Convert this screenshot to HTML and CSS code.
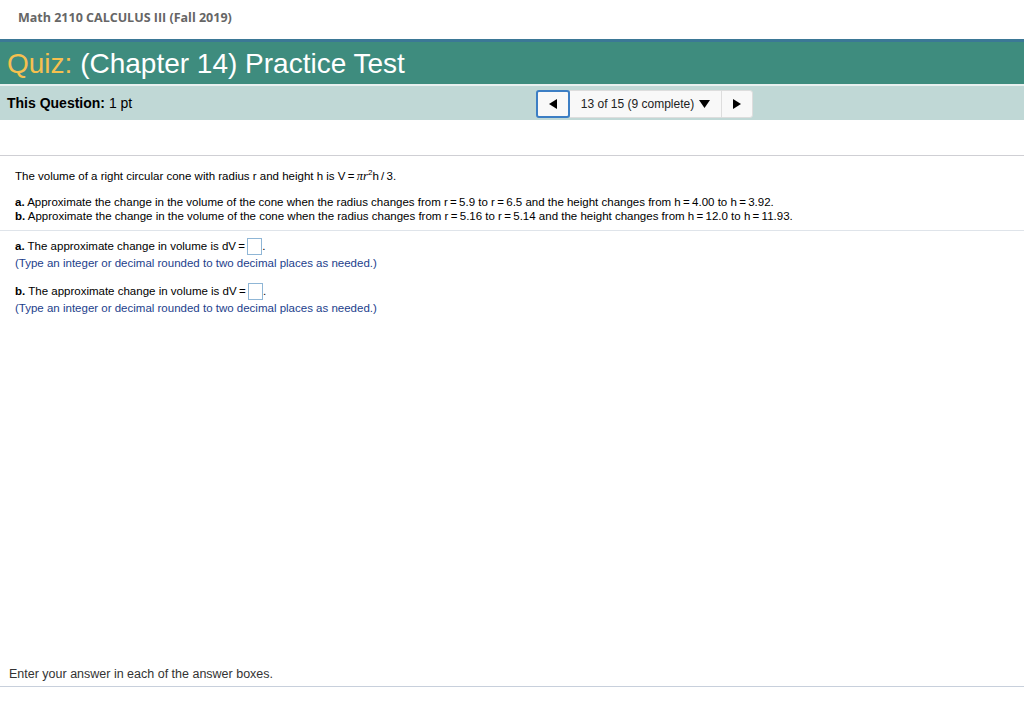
FILE: index.html
```html
<!DOCTYPE html>
<html>
<head>
<meta charset="utf-8">
<link rel="stylesheet" href="styles.css">
</head>
<body>
<div class="course">Math 2110 CALCULUS III (Fall 2019)</div>
<div class="quiz-header"><span class="quiz-label">Quiz:</span> (Chapter 14) Practice Test</div>
<div class="question-bar">
  <div class="points"><b>This Question:</b> 1 pt</div>
  <div class="nav">
    <button class="nav-btn prev"><svg width="8" height="10" viewBox="0 0 8 10"><path d="M8 0 L0 5 L8 10 Z" fill="#000"/></svg></button>
    <button class="nav-mid">13 of 15 (9 complete) <svg width="11" height="8" viewBox="0 0 11 8"><path d="M0 0 L11 0 L5.5 8 Z" fill="#000"/></svg></button>
    <button class="nav-btn next"><svg width="8" height="10" viewBox="0 0 8 10"><path d="M0 0 L8 5 L0 10 Z" fill="#000"/></svg></button>
  </div>
</div>
<div class="main">
  <div class="problem">
    <p class="intro">The volume of a right circular cone with radius r and height h is V&thinsp;=&thinsp;<i class="m">πr</i><sup>2</sup>h&thinsp;/&thinsp;3.</p>
    <p class="parts"><b>a.</b> Approximate the change in the volume of the cone when the radius changes from r&thinsp;=&thinsp;5.9 to r&thinsp;=&thinsp;6.5 and the height changes from h&thinsp;=&thinsp;4.00 to h&thinsp;=&thinsp;3.92.<br><b>b.</b> Approximate the change in the volume of the cone when the radius changes from r&thinsp;=&thinsp;5.16 to r&thinsp;=&thinsp;5.14 and the height changes from h&thinsp;=&thinsp;12.0 to h&thinsp;=&thinsp;11.93.</p>
  </div>
  <div class="answers">
    <div class="answer">
      <div><b>a.</b> The approximate change in volume is dV&thinsp;=&thinsp;<span class="box"></span>.</div>
      <div class="hint">(Type an integer or decimal rounded to two decimal places as needed.)</div>
    </div>
    <div class="answer">
      <div><b>b.</b> The approximate change in volume is dV&thinsp;=&thinsp;<span class="box"></span>.</div>
      <div class="hint">(Type an integer or decimal rounded to two decimal places as needed.)</div>
    </div>
  </div>
</div>
<div class="footer">Enter your answer in each of the answer boxes.</div>
</body>
</html>
```
FILE: styles.css
```css
html, body { margin: 0; padding: 0; background: #fff; }
body { font-family: "Liberation Sans", Arial, sans-serif; color: #000; width: 1024px; height: 724px; overflow: hidden; }

.course {
  height: 39px;
  box-sizing: border-box;
  padding: 9px 0 0 18px;
  font-family: "Open Sans", sans-serif;
  font-weight: 700;
  font-size: 12.5px;
  color: #666;
}

.quiz-header {
  border-top: 3px solid #3b7896;
  background: #3e8c7e;
  box-sizing: border-box;
  padding: 5px 0 0 7px;
  color: #fff;
  font-size: 28px;
  line-height: 34px;
  border-bottom: 2px solid #e8f0ef;
  height: 47px;
}
.quiz-label { color: #f6c04f; }

.question-bar {
  background: #c0d8d6;
  height: 34px;
  display: flex;
  align-items: center;
}
.points { width: 536px; padding-left: 7px; box-sizing: border-box; font-size: 14px; }

.nav { display: flex; height: 28px; margin-top: 2px; }
.nav button {
  margin: 0;
  font-family: "Liberation Sans", Arial, sans-serif;
  background: #f8f8f8;
  border: 1px solid #ddd;
  height: 28px;
  display: flex;
  align-items: center;
  justify-content: center;
  padding: 0;
}
.nav-btn { width: 33px; }
.prev { border: 2px solid #3c7ec4 !important; border-radius: 3px; width: 34px; }
.nav-mid { width: 151px; font-size: 12px; color: #222; gap: 5px; border-left: none !important; border-right: none !important; }
.next { border-radius: 0 3px 3px 0; width: 32px; }

.main {
  margin-top: 35px;
  border-top: 1px solid #cfcfd4;
  font-size: 11.5px;
}
.problem { border-bottom: 1px solid #dfe4ea; padding: 13px 15px 7px; }
.problem p { margin: 0; line-height: 14px; }
.problem .intro { margin-bottom: 12px; }
.m { font-family: "Liberation Serif", serif; font-size: 12.5px; }
sup { font-size: 8px; line-height: 0; }

.answers { padding: 7px 15px 0; }
.answer { margin-bottom: 11px; line-height: 17px; }
.box {
  display: inline-block;
  width: 13px;
  height: 15px;
  border: 1px solid #8fb6d6;
  vertical-align: -5px;
  background: #fff;
}
.hint { color: #1c3e8c; }

.footer {
  position: absolute;
  top: 667px;
  left: 0;
  width: 1024px;
  box-sizing: border-box;
  padding: 0 0 5px 9px;
  font-size: 12.5px;
  color: #333;
  border-bottom: 1px solid #c8d0dc;
}
```
